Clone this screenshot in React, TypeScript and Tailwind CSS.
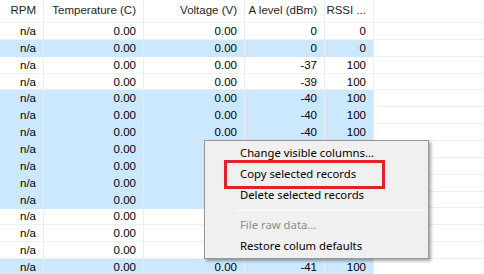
import React from 'react';

type Row = { rpm: string; temp: string; volt: string; level: string; rssi: string; sel: boolean };

const levels = ['0', '0', '-37', '-39', '-40', '-40', '-40', '-40', '-40', '-40', '-40', '-40', '-40', '-40', '-41'];
const rssis = ['0', '0', '100', '100', '100', '100', '100', '100', '100', '100', '100', '100', '100', '100', '100'];
const selected = [1, 4, 5, 6, 7, 8, 9, 10, 14];

const rows: Row[] = levels.map((lv, i) => ({
  rpm: 'n/a',
  temp: '0.00',
  volt: '0.00',
  level: lv,
  rssi: rssis[i],
  sel: selected.includes(i),
}));

const cols = 'grid grid-cols-[44px_100px_101px_80px_49px_1fr]';

function Cell({ children, last }: { children?: React.ReactNode; last?: boolean }) {
  return (
    <div className={`flex items-center justify-end pr-[7px] ${last ? '' : 'border-r border-[#ececec]'}`}>
      {children}
    </div>
  );
}

function MenuItem({ label, disabled }: { label: string; disabled?: boolean }) {
  return (
    <div className={`h-[21px] flex items-center pl-[35px] ${disabled ? 'text-[#8d8d8d]' : 'text-black'}`}>{label}</div>
  );
}

export default function App() {
  return (
    <div className="relative w-[484px] h-[274px] overflow-hidden bg-white text-[11.5px] text-black font-['Liberation_Sans',Tahoma,sans-serif]">
      <div className={`${cols} h-[22px] text-[#1e1e1e]`}>
        <Cell>RPM</Cell>
        <Cell>Temperature (C)</Cell>
        <Cell>Voltage (V)</Cell>
        <Cell>A level (dBm)</Cell>
        <Cell>RSSI ...</Cell>
        <Cell last />
      </div>
      {rows.map((r, i) => (
        <div key={i} className={`${cols} h-[16.86px] border-t border-[#efefef]`}>
          <div className={`col-span-5 grid grid-cols-[44px_100px_101px_80px_49px] ${r.sel ? 'bg-[#cce8ff]' : ''}`}>
            <Cell>{r.rpm}</Cell>
            <Cell>{r.temp}</Cell>
            <Cell>{r.volt}</Cell>
            <Cell>{r.level}</Cell>
            <Cell>{r.rssi}</Cell>
          </div>
          <div />
        </div>
      ))}

      <div className="absolute left-[204px] top-[140px] w-[225px] h-[119px] bg-[#f0f0f0] border border-[#979797] shadow-[2px_2px_3px_rgba(0,0,0,0.35)] py-[2px] text-[11.3px] font-['Noto_Sans',sans-serif]">
        <MenuItem label="Change visible columns..." />
        <MenuItem label="Copy selected records" />
        <MenuItem label="Delete selected records" />
        <div className="h-[9px] flex items-center pl-[31px] pr-[2px]">
          <div className="h-px w-full bg-[#d7d7d7] border-b border-white" />
        </div>
        <MenuItem label="File raw data..." disabled />
        <MenuItem label="Restore colum defaults" />
      </div>
      <div className="absolute left-[224px] top-[160px] w-[161px] h-[29px] border-[3px] border-[#e3212b]" />
    </div>
  );
}
